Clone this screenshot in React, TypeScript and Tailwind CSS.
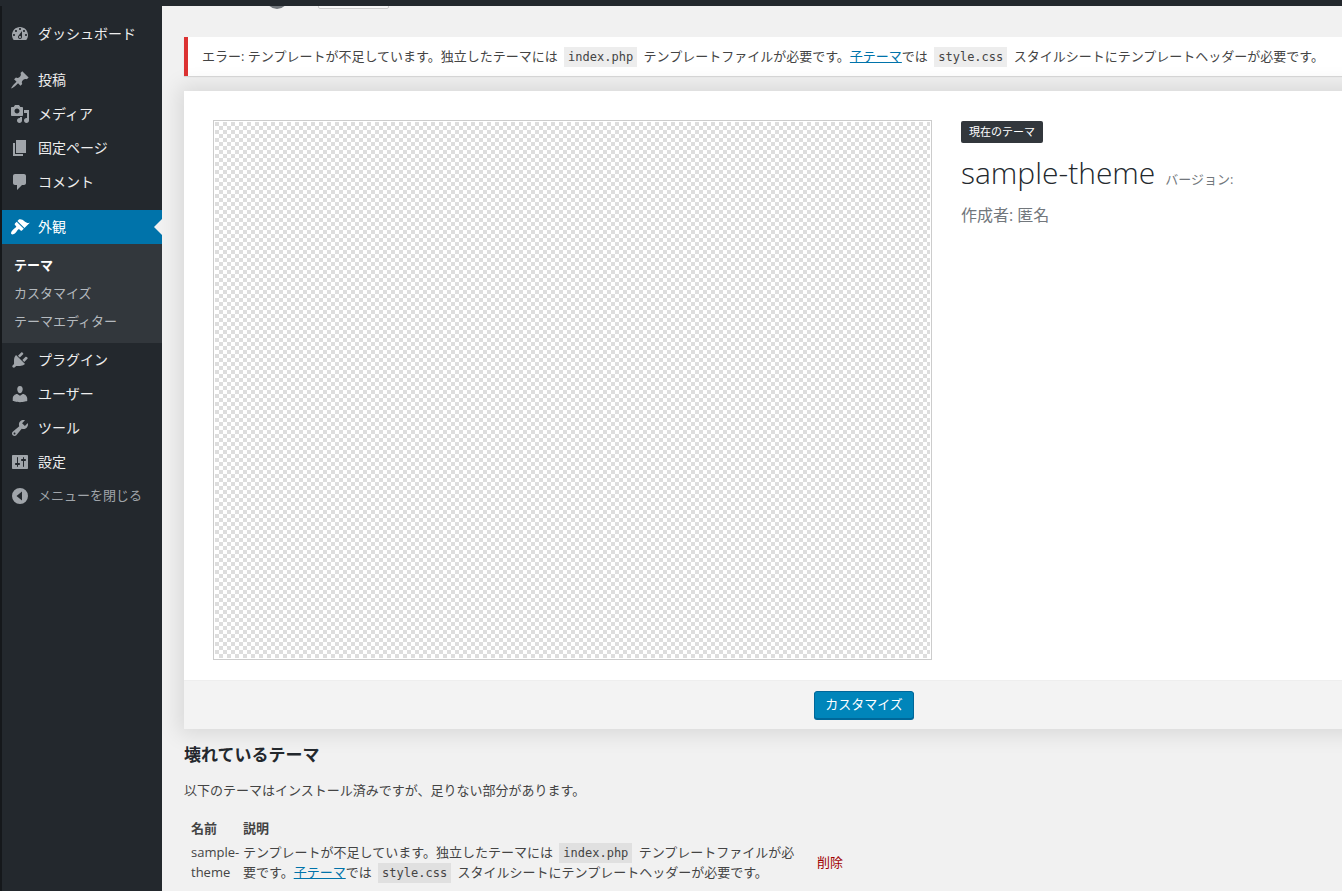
import clsx from "clsx"

const icons = {
  dashboard: "M3.76 16h12.48c1.1-1.37 1.76-3.11 1.76-5 0-4.42-3.58-8-8-8s-8 3.58-8 8c0 1.89.66 3.63 1.76 5zM10 4c.55 0 1 .45 1 1s-.45 1-1 1-1-.45-1-1 .45-1 1-1zM6 6c.55 0 1 .45 1 1s-.45 1-1 1-1-.45-1-1 .45-1 1-1zm8 0c.55 0 1 .45 1 1s-.45 1-1 1-1-.45-1-1 .45-1 1-1zm-5.37 5.55L12 7v6c0 1.1-.9 2-2 2s-2-.9-2-2c0-.57.24-1.08.63-1.45zM4 10c.55 0 1 .45 1 1s-.45 1-1 1-1-.45-1-1 .45-1 1-1zm12 0c.55 0 1 .45 1 1s-.45 1-1 1-1-.45-1-1 .45-1 1-1zm-5 3c0-.55-.45-1-1-1s-1 .45-1 1 .45 1 1 1 1-.45 1-1z",
  post: "M10.44 3.02l1.82-1.82 6.36 6.35-1.83 1.82c-1.05-.68-2.48-.57-3.41.36l-.75.75c-.92.93-1.04 2.35-.35 3.41l-1.83 1.82-2.41-2.41-2.8 2.79c-.42.42-3.38 2.71-3.8 2.29s1.86-3.39 2.28-3.81l2.79-2.79L4.1 9.36l1.83-1.82c1.05.69 2.48.57 3.4-.36l.75-.75c.93-.92 1.05-2.35.36-3.41z",
  media: "M13 11V4c0-.55-.45-1-1-1h-1.67L9 1H5L3.67 3H2c-.55 0-1 .45-1 1v7c0 .55.45 1 1 1h10c.55 0 1-.45 1-1zM7 4.5c1.38 0 2.5 1.12 2.5 2.5S8.38 9.5 7 9.5 4.5 8.38 4.5 7 5.62 4.5 7 4.5zM14 6h5v10.5c0 1.38-1.12 2.5-2.5 2.5S14 17.88 14 16.5s1.12-2.5 2.5-2.5c.17 0 .34.02.5.05V9h-3V6zm-4 8.05V13h2v3.5c0 1.38-1.12 2.5-2.5 2.5S7 17.88 7 16.5 8.12 14 9.5 14c.17 0 .34.02.5.05z",
  page: "M6 15V2h10v13H6zm-1 1h8v2H3V5h2v11z",
  comments: "M5 2h9c1.1 0 2 .9 2 2v7c0 1.1-.9 2-2 2h-2l-5 5v-5H5c-1.1 0-2-.9-2-2V4c0-1.1.9-2 2-2z",
  appearance: "M14.48 11.06L7.41 3.99l1.5-1.5c.5-.56 2.3-.47 3.51.32 1.21.8 1.43 1.28 2.91 2.1 1.18.64 2.45 1.26 4.45.85zm-.71.71L6.7 4.7 4.93 6.47c-.39.39-.39 1.02 0 1.41l1.06 1.06c.39.39.39 1.03 0 1.42-.6.6-1.43 1.11-2.21 1.69-.35.26-.7.53-1.01.84C1.43 14.23.4 16.08 1.4 17.07c.99 1 2.84-.03 4.18-1.36.31-.31.58-.66.85-1.02.57-.78 1.08-1.61 1.69-2.21.39-.39 1.02-.39 1.41 0l1.06 1.06c.39.39 1.02.39 1.41 0z",
  plugins: "M13.11 4.36L9.87 7.6 8 5.73l3.24-3.24c.35-.34 1.05-.2 1.56.32.52.51.66 1.21.31 1.55zm-8 1.77l.91-1.12 9.01 9.01-1.19.84c-.71.71-2.63 1.16-3.82 1.16H6.14L4.9 17.26c-.59.59-1.54.59-2.12 0-.59-.58-.59-1.53 0-2.12l1.24-1.24v-3.88c0-1.13.4-3.19 1.09-3.89zm7.26 3.97l3.24-3.24c.34-.35 1.04-.21 1.55.31.52.51.66 1.21.31 1.55l-3.24 3.25z",
  users: "M10 9.25c-2.27 0-2.73-3.44-2.73-3.44C7 4.02 7.82 2 9.97 2c2.16 0 2.98 2.02 2.71 3.81 0 0-.41 3.44-2.68 3.44zm0 2.57L12.72 10c2.39 0 4.52 2.33 4.52 4.53v2.49s-3.65 1.13-7.24 1.13c-3.65 0-7.24-1.13-7.24-1.13v-2.49c0-2.25 1.94-4.48 4.47-4.48z",
  tools: "M16.68 9.77c-1.34 1.34-3.3 1.67-4.95.99l-5.41 6.52c-.99.99-2.59.99-3.58 0s-.99-2.59 0-3.57l6.52-5.42c-.68-1.65-.35-3.61.99-4.95 1.28-1.28 3.12-1.62 4.72-1.06l-2.89 2.89 2.82 2.82 2.86-2.87c.53 1.58.18 3.39-1.08 4.65zM3.81 16.21c.4.39 1.04.39 1.43 0 .4-.4.4-1.04 0-1.43-.39-.4-1.03-.4-1.43 0-.39.39-.39 1.03 0 1.43z",
  settings: "M18 16V4c0-.55-.45-1-1-1H3c-.55 0-1 .45-1 1v12c0 .55.45 1 1 1h14c.55 0 1-.45 1-1zM8 11h1c.55 0 1 .45 1 1s-.45 1-1 1H8v1.5c0 .28-.22.5-.5.5s-.5-.22-.5-.5V13H6c-.55 0-1-.45-1-1s.45-1 1-1h1V5.5c0-.28.22-.5.5-.5s.5.22.5.5V11zm5-2h-1c-.55 0-1-.45-1-1s.45-1 1-1h1V5.5c0-.28.22-.5.5-.5s.5.22.5.5V7h1c.55 0 1 .45 1 1s-.45 1-1 1h-1v5.5c0 .28-.22.5-.5.5s-.5-.22-.5-.5V9z",
  collapse: "M10 2a8 8 0 1 0 0 16a8 8 0 1 0 0-16zM12 5.5v9L6.5 10z",
}

type IconName = keyof typeof icons

const contentMenu: { label: string; icon: IconName }[] = [
  { label: "投稿", icon: "post" },
  { label: "メディア", icon: "media" },
  { label: "固定ページ", icon: "page" },
  { label: "コメント", icon: "comments" },
]

const systemMenu: { label: string; icon: IconName }[] = [
  { label: "プラグイン", icon: "plugins" },
  { label: "ユーザー", icon: "users" },
  { label: "ツール", icon: "tools" },
  { label: "設定", icon: "settings" },
]

const themeMenu = ["テーマ", "カスタマイズ", "テーマエディター"]

function Icon({ name }: { name: IconName }) {
  return (
    <svg viewBox="0 0 20 20" className="size-5 shrink-0 fill-current" aria-hidden="true">
      <path fillRule="evenodd" d={icons[name]} />
    </svg>
  )
}

function MenuItem({ label, icon, current }: { label: string; icon: IconName; current?: boolean }) {
  return (
    <a href="#" className={clsx("relative flex h-[34px] items-center gap-2 pl-2 text-sm", current ? "bg-[#0073aa] text-white" : "text-[#eeeeee]")}>
      <span className={current ? "text-white" : "text-[#a0a5aa]"}><Icon name={icon} /></span>
      {label}
      {current && <span className="absolute right-0 top-1/2 -mt-2 border-8 border-transparent border-r-[#f1f1f1]" />}
    </a>
  )
}

function Code({ children }: { children: string }) {
  return <code className="mx-[3px] bg-black/7 px-1 py-[3px] font-['DejaVu_Sans_Mono',monospace] text-xs">{children}</code>
}

function TemplateMissing() {
  return (
    <>
      テンプレートが不足しています。独立したテーマには <Code>index.php</Code> テンプレートファイルが必要です。<a href="#" className="text-[#0073aa] underline">子テーマ</a>では <Code>style.css</Code> スタイルシートにテンプレートヘッダーが必要です。
    </>
  )
}

function Sidebar() {
  return (
    <nav className="w-[162px] shrink-0 border-l-2 border-[#15181b] bg-[#23282d] pt-[11px]">
      <MenuItem label="ダッシュボード" icon="dashboard" />
      <div className="mt-3">
        {contentMenu.map((item) => <MenuItem key={item.label} {...item} />)}
      </div>
      <div className="mt-[11px]">
        <MenuItem label="外観" icon="appearance" current />
        <ul className="bg-[#32373c] pt-2 pb-[7px] text-[13px]">
          {themeMenu.map((label, i) => (
            <li key={label}>
              <a href="#" className={clsx("flex h-7 items-center pl-3", i === 0 ? "font-bold text-white" : "text-[#b4b9be]")}>{label}</a>
            </li>
          ))}
        </ul>
        {systemMenu.map((item) => <MenuItem key={item.label} {...item} />)}
        <button type="button" className="flex h-[34px] w-full items-center gap-2 pl-2 text-left text-[13px] text-[#a0a5aa]">
          <Icon name="collapse" />
          メニューを閉じる
        </button>
      </div>
    </nav>
  )
}

function CurrentTheme() {
  return (
    <section className="mt-[15px] bg-white shadow-[0_0_20px_5px_rgba(0,0,0,0.1)]">
      <div className="flex gap-[29px] px-[29px] pt-[29px] pb-5">
        <div className="h-[540px] w-[719px] shrink-0 border border-[#cccccc] bg-white p-px">
          <div className="h-full bg-[conic-gradient(#ffffff_25%,#dddddd_0_50%,#ffffff_0_75%,#dddddd_0)] bg-[length:8px_8px]" />
        </div>
        <div className="pt-px">
          <span className="block w-fit rounded-xs bg-[#32373c] px-2 text-[11px] leading-[22px] text-white">現在のテーマ</span>
          <h2 className="mt-[10px] text-[30px] leading-10 font-light text-[#23282d]">
            sample-theme
            <span className="ml-[10px] text-[13px] font-normal text-[#72777c]">バージョン:</span>
          </h2>
          <p className="mt-1 text-base leading-6 text-[#72777c]">作成者: 匿名</p>
        </div>
      </div>
      <div className="flex h-[49px] items-center justify-center border-t border-[#eeeeee] bg-[#f3f3f3]">
        <a href="#" className="flex h-7 items-center rounded-[3px] border border-[#006799] bg-[#0085ba] px-[10px] text-[13px] text-white shadow-[0_1px_0_#006799]">カスタマイズ</a>
      </div>
    </section>
  )
}

function BrokenThemes() {
  return (
    <section>
      <h3 className="mt-[14px] text-[17px] leading-6 font-bold text-[#23282d]">壊れているテーマ</h3>
      <p className="mt-[13px] leading-5">以下のテーマはインストール済みですが、足りない部分があります。</p>
      <table className="mt-4 ml-1 border-collapse text-left leading-5">
        <thead>
          <tr>
            <th className="px-[3px] py-0.5">名前</th>
            <th className="px-[3px] py-0.5">説明</th>
            <td />
          </tr>
        </thead>
        <tbody>
          <tr>
            <td className="px-[3px] py-0.5"><div className="w-[46px]">sample-theme</div></td>
            <td className="w-[574px] py-0.5 pr-[18px] pl-[3px]"><TemplateMissing /></td>
            <td className="px-[3px]"><a href="#" className="text-[#a00000]">削除</a></td>
          </tr>
        </tbody>
      </table>
    </section>
  )
}

export default function App() {
  return (
    <div className="flex h-screen flex-col overflow-hidden bg-[#f1f1f1] font-['Open_Sans','Noto_Sans_CJK_JP',sans-serif] text-[13px] text-[#444444]">
      <div className="h-[6px] shrink-0 bg-[#23282d]" />
      <div className="flex min-h-0 flex-1">
        <Sidebar />
        <main className="min-w-0 flex-1 overflow-hidden pl-[22px]">
          {/* the theme panel runs wider than the window */}
          <div className="-mr-[202px]">
            <div className="flex h-[3px] items-end gap-[30px] overflow-hidden pl-[82px]">
              <span className="size-[22px] rounded-full bg-[#72777c]" />
              <span className="h-7 w-[71px] rounded-xs border border-[#cccccc] bg-[#f7f7f7]" />
            </div>
            <div className="mt-7 border-l-4 border-[#dc3232] bg-white px-[14px] leading-[39px] shadow-[0_1px_1px_rgba(0,0,0,0.1)]">
              <p>エラー: <TemplateMissing /></p>
            </div>
            <CurrentTheme />
            <BrokenThemes />
          </div>
        </main>
      </div>
    </div>
  )
}
